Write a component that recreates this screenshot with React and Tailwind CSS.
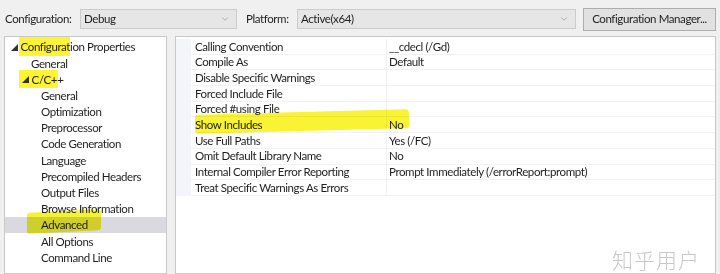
import { ChevronDown } from 'lucide-react';

const font = { fontFamily: 'Lato, "Noto Sans CJK SC", sans-serif', letterSpacing: '-0.4px' };

const tree = [
  { label: 'Configuration Properties', indent: 'pl-[6px]', arrow: true },
  { label: 'General', indent: 'pl-[26px]' },
  { label: 'C/C++', indent: 'pl-[17px]', arrow: true },
  { label: 'General', indent: 'pl-[36px]' },
  { label: 'Optimization', indent: 'pl-[36px]' },
  { label: 'Preprocessor', indent: 'pl-[36px]' },
  { label: 'Code Generation', indent: 'pl-[36px]' },
  { label: 'Language', indent: 'pl-[36px]' },
  { label: 'Precompiled Headers', indent: 'pl-[36px]' },
  { label: 'Output Files', indent: 'pl-[36px]' },
  { label: 'Browse Information', indent: 'pl-[36px]' },
  { label: 'Advanced', indent: 'pl-[36px]', selected: true },
  { label: 'All Options', indent: 'pl-[36px]' },
  { label: 'Command Line', indent: 'pl-[36px]' },
];

const props = [
  ['Calling Convention', '__cdecl (/Gd)'],
  ['Compile As', 'Default'],
  ['Disable Specific Warnings', ''],
  ['Forced Include File', ''],
  ['Forced #using File', ''],
  ['Show Includes', 'No'],
  ['Use Full Paths', 'Yes (/FC)'],
  ['Omit Default Library Name', 'No'],
  ['Internal Compiler Error Reporting', 'Prompt Immediately (/errorReport:prompt)'],
  ['Treat Specific Warnings As Errors', ''],
];

function Select({ value, className }) {
  return (
    <div
      className={`flex h-[20px] items-center justify-between border border-[#cccccc] bg-[#e6e6e6] pl-[3px] pr-[6px] ${className}`}
    >
      <span>{value}</span>
      <ChevronDown size={10} strokeWidth={1.5} className="text-[#8a8a8a]" />
    </div>
  );
}

export default function App() {
  return (
    <div
      className="relative h-[274px] w-[720px] overflow-hidden bg-[#f0f0f0] text-[11.5px] text-[#1e1e1e]"
      style={font}
    >
      <div className="flex h-[36px] items-center pl-[5px] pt-[2px]">
        <span className="w-[75px]">Configuration:</span>
        <Select value="Debug" className="w-[157px]" />
        <span className="ml-[9px] w-[51px]">Platform:</span>
        <Select value="Active(x64)" className="w-[279px]" />
        <button className="ml-[7px] h-[23px] w-[133px] whitespace-nowrap border border-[#adadad] bg-[#e1e1e1]">
          Configuration Manager...
        </button>
      </div>

      <div className="flex h-[238px] pl-[4px] pr-[4px]">
        <div className="w-[163px] border border-[#c9c9c9] bg-white pt-[2px]">
          {tree.map((t, i) => (
            <div
              key={i}
              className={`flex h-[16.2px] items-center leading-none ${t.indent} ${t.selected ? 'bg-[#d9d9df]' : ''}`}
            >
              {t.arrow && <span className="mr-[3px] text-[7px] text-[#333]">◢</span>}
              <span>{t.label}</span>
            </div>
          ))}
        </div>
        <div className="w-[8px]" />
        <div className="flex-1 border border-[#c9c9c9] bg-white pt-[2px]">
          {props.map(([k, v], i) => (
            <div key={i} className="flex h-[15.7px] items-center leading-none">
              <div className="h-full w-[15px] bg-[#f3f5fa]" />
              <div className="flex h-full w-[196px] items-center border-b border-r border-[#f2f2f2] pl-[4px]">
                {k}
              </div>
              <div className="flex h-full flex-1 items-center border-b border-[#f2f2f2] pl-[2px]">{v}</div>
            </div>
          ))}
        </div>
      </div>

      {/* highlighter marks */}
      <div className="pointer-events-none absolute left-[19px] top-[37px] h-[19px] w-[51px] bg-[#fff200] opacity-80 mix-blend-multiply" />
      <div className="pointer-events-none absolute left-[19px] top-[70px] h-[18px] w-[39px] bg-[#fff200] opacity-80 mix-blend-multiply" />
      <div className="pointer-events-none absolute left-[27px] top-[211px] h-[21px] w-[74px] -skew-y-3 rounded-[3px] bg-[#f0ef00] opacity-80 mix-blend-multiply" />
      <div className="pointer-events-none absolute left-[195px] top-[112px] h-[19px] w-[214px] -rotate-[1.5deg] rounded-[3px] bg-[#f8f000] opacity-80 mix-blend-multiply" />

      <div className="pointer-events-none absolute left-[612px] top-[244px] text-[21px] font-light tracking-[1px] text-[#c8c8c8]">
        知乎用户
      </div>
    </div>
  );
}
